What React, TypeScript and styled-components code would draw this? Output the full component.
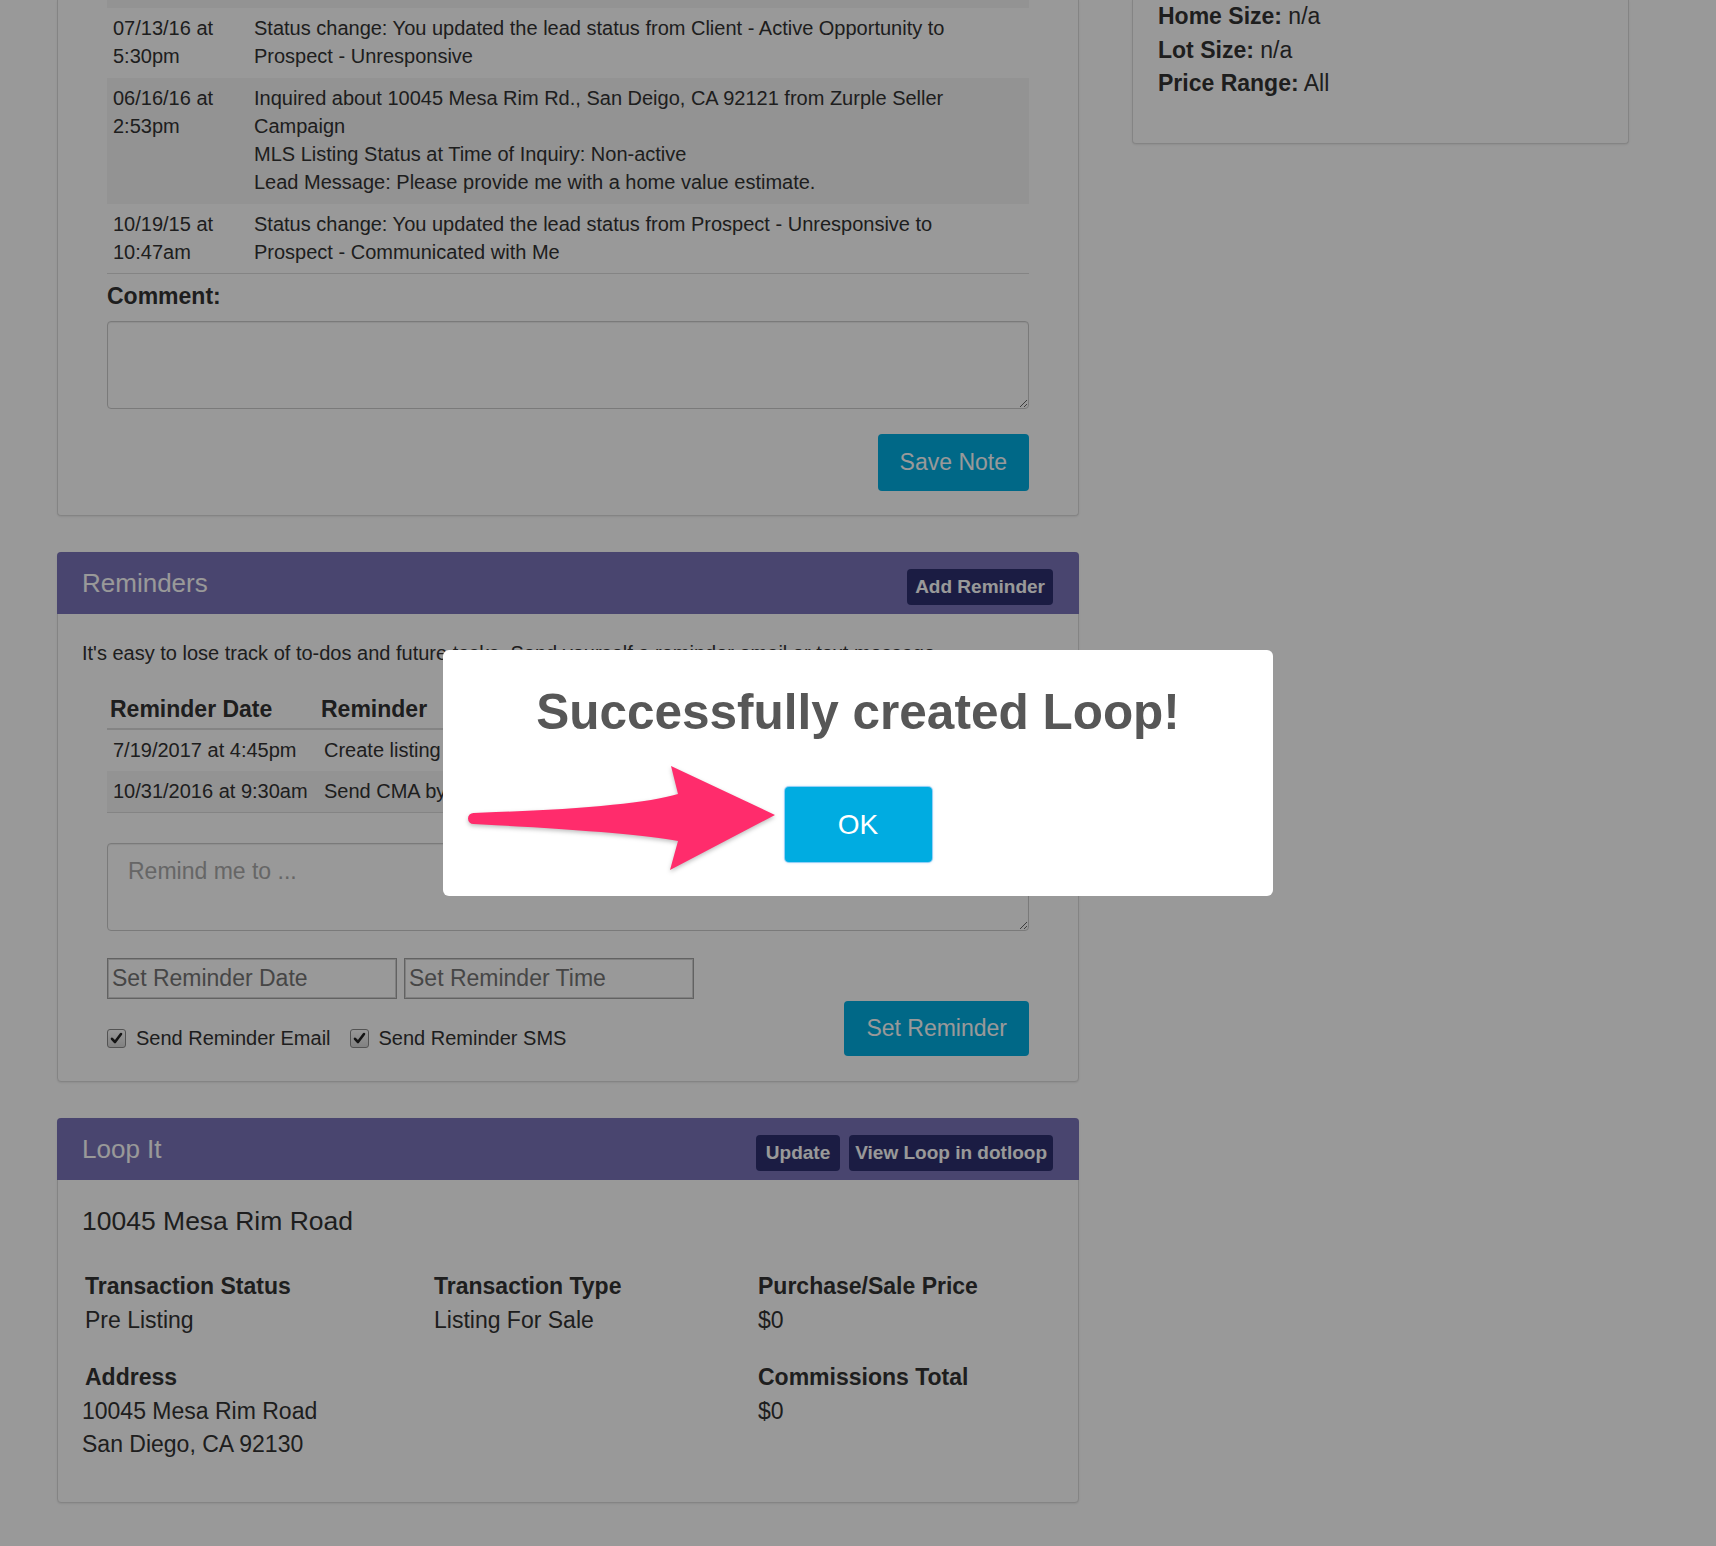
import React from "react";
import styled, { createGlobalStyle } from "styled-components";

const GlobalStyle = createGlobalStyle`
  html, body { margin: 0; padding: 0; background: #fff; }
  body {
    font-family: "Liberation Sans", Arial, Helvetica, sans-serif;
    color: #333;
    font-size: 20px;
    line-height: 1.42857;
  }
  * { box-sizing: border-box; }
`;

const Page = styled.div`
  display: flex;
  align-items: flex-start;
  gap: 53px;
  padding-left: 57px;
  min-height: 1546px;
`;

const MainColumn = styled.div`
  width: 1022px;
  display: flex;
  flex-direction: column;
  gap: 36px;
`;

const SideColumn = styled.div`
  width: 497px;
`;

const Panel = styled.section<{ $cut?: boolean }>`
  background: #fff;
  border: 1px solid #ddd;
  border-top: ${(p) => (p.$cut ? "none" : "1px solid #ddd")};
  border-radius: ${(p) => (p.$cut ? "0 0 4px 4px" : "4px")};
  box-shadow: 0 1px 2px rgba(0, 0, 0, 0.08);
`;

const PanelHeader = styled.header`
  height: 62px;
  margin: -1px -1px 0;
  padding: 0 26px 0 25px;
  background: #7b74b9;
  border-radius: 4px 4px 0 0;
  display: flex;
  align-items: center;
  justify-content: space-between;
`;

const PanelTitle = styled.h3`
  margin: 0;
  font-size: 26px;
  font-weight: normal;
  line-height: 1.1;
  color: #fff;
`;

const HeaderActions = styled.div`
  display: flex;
  gap: 9px;
  margin-top: 8px;
`;

const HeaderButton = styled.button<{ $px?: number }>`
  height: 36px;
  padding: 0 ${(p) => p.$px ?? 8}px;
  border: none;
  border-radius: 4px;
  background: #2d3070;
  color: #fff;
  font-family: inherit;
  font-size: 19px;
  font-weight: bold;
`;

const PanelBody = styled.div<{ $pad: string }>`
  padding: ${(p) => p.$pad};
  display: flex;
  flex-direction: column;
`;

/* Notes */
const StubRow = styled.div`
  height: 8px;
  background: #f5f5f5;
`;

const NotesTable = styled.div`
  border-bottom: 1px solid #ddd;
`;

const NoteRow = styled.div<{ $shaded?: boolean }>`
  display: grid;
  grid-template-columns: 141px 781px;
  padding: 6px 0 7px;
  line-height: 28.3px;
  background: ${(p) => (p.$shaded ? "#f5f5f5" : "transparent")};
`;

const DateCell = styled.div`
  padding: 0 6px;
`;

const MessageCell = styled.div`
  padding: 0 45px 0 6px;
`;

const FieldLabel = styled.label`
  display: block;
  margin-top: 8px;
  font-size: 23px;
  font-weight: bold;
  line-height: 28px;
`;

const TextArea = styled.textarea<{ $mt: number }>`
  display: block;
  width: 100%;
  height: 88px;
  margin-top: ${(p) => p.$mt}px;
  padding: 14px 20px;
  border: 1px solid #ccc;
  border-radius: 4px;
  box-shadow: inset 0 1px 1px rgba(0, 0, 0, 0.075);
  font-family: inherit;
  font-size: 23px;
  color: #333;
  background: #fff;
  resize: vertical;
  &::placeholder { color: #aaa; }
`;

const PrimaryButton = styled.button<{ $h: number; $mt?: number }>`
  align-self: flex-end;
  height: ${(p) => p.$h}px;
  margin-top: ${(p) => p.$mt ?? 0}px;
  padding: 0 22px;
  border: none;
  border-radius: 4px;
  background: #00ade2;
  color: #fff;
  font-family: inherit;
  font-size: 23px;
`;

/* Reminders */
const Intro = styled.p`
  margin: 0;
  line-height: 28px;
`;

const Indent = styled.div`
  padding: 0 25px;
  display: flex;
  flex-direction: column;
`;

const ReminderTable = styled.div`
  margin-top: 20px;
  border-bottom: 1px solid #ddd;
`;

const ReminderHead = styled.div`
  display: grid;
  grid-template-columns: 211px 1fr;
  border-bottom: 2px solid #ddd;
`;

const HeadCell = styled.div`
  padding: 6px 3px 2px;
  font-size: 23px;
  font-weight: bold;
  line-height: 33px;
`;

const ReminderRow = styled.div<{ $shaded?: boolean }>`
  display: grid;
  grid-template-columns: 211px 1fr;
  padding: 6px 0 7px;
  line-height: 28px;
  background: ${(p) => (p.$shaded ? "#f5f5f5" : "transparent")};
`;

const Cell = styled.div`
  padding: 0 6px;
  white-space: nowrap;
`;

const FormFooter = styled.div`
  margin-top: 27px;
  display: flex;
  justify-content: space-between;
  align-items: flex-end;
`;

const FormLeft = styled.div`
  display: flex;
  flex-direction: column;
`;

const InputGroup = styled.div`
  display: flex;
  gap: 7px;
`;

const TextInput = styled.input`
  width: 290px;
  height: 41px;
  padding: 0 4px;
  border: 1px solid #a4a4a4;
  box-shadow: inset 0 0 0 1px #d6d6d6;
  border-radius: 0;
  font-family: inherit;
  font-size: 23px;
  background: #fff;
  &::placeholder { color: #757575; }
`;

const CheckRow = styled.div`
  margin-top: 25px;
  padding-bottom: 4px;
  display: flex;
  align-items: center;
  gap: 19px;
  line-height: 28px;
`;

const CheckLabel = styled.label`
  display: inline-flex;
  align-items: center;
  gap: 10px;
`;

const CheckBox = styled.span`
  width: 19px;
  height: 19px;
  border: 1px solid #8a8a8a;
  border-radius: 3px;
  background: linear-gradient(#fdfdfd, #d8d8d8);
  display: inline-flex;
  align-items: center;
  justify-content: center;
`;

/* Loop It */
const LoopTitle = styled.div`
  font-size: 26.5px;
  line-height: 32px;
`;

const InfoGrid = styled.div`
  margin-top: 33px;
  padding-left: 3px;
  display: grid;
  grid-template-columns: 349px 324px 1fr;
  row-gap: 24px;
  font-size: 23px;
  line-height: 33.5px;
`;

const InfoLabel = styled.div`
  font-weight: bold;
`;

const AddressLine = styled.div`
  margin-left: -3px;
`;

/* Side */
const SideBody = styled.div`
  padding: 0 25px 42px;
  font-size: 23px;
  line-height: 33.5px;
`;

const SideLabel = styled.b`
  font-weight: bold;
`;

/* Modal */
const Overlay = styled.div`
  position: fixed;
  inset: 0;
  background: rgba(0, 0, 0, 0.4);
  display: flex;
  align-items: center;
  justify-content: center;
  z-index: 10;
`;

const Modal = styled.div`
  position: relative;
  width: 830px;
  height: 246px;
  padding-top: 33px;
  background: #fff;
  border-radius: 6px;
  display: flex;
  flex-direction: column;
  align-items: center;
`;

const ModalTitle = styled.h2`
  margin: 0;
  font-size: 49.5px;
  font-weight: bold;
  line-height: 57px;
  color: #575757;
`;

const OkButton = styled.button`
  margin-top: 47px;
  width: 147px;
  height: 75px;
  border: none;
  border-radius: 4px;
  background: #00ace1;
  color: #fff;
  font-family: inherit;
  font-size: 28px;
  box-shadow: 0 0 0 1px rgba(140, 205, 245, 0.9), 0 0 3px rgba(128, 179, 235, 0.8);
`;

const ArrowSvg = styled.svg`
  position: absolute;
  left: 20px;
  top: 110px;
  overflow: visible;
  filter: drop-shadow(0 2px 2px rgba(0, 0, 0, 0.25));
`;

const Check = () => (
  <CheckBox>
    <svg width="15" height="15" viewBox="0 0 15 15">
      <path d="M3 7.8 L6 11 L12 3" fill="none" stroke="#222" strokeWidth="2.6" strokeLinecap="round" strokeLinejoin="round" />
    </svg>
  </CheckBox>
);

const notes = [
  {
    date: "07/13/16 at 5:30pm",
    lines: ["Status change: You updated the lead status from Client - Active Opportunity to Prospect - Unresponsive"],
  },
  {
    date: "06/16/16 at 2:53pm",
    lines: [
      "Inquired about 10045 Mesa Rim Rd., San Deigo, CA 92121 from Zurple Seller Campaign",
      "MLS Listing Status at Time of Inquiry: Non-active",
      "Lead Message: Please provide me with a home value estimate.",
    ],
    shaded: true,
  },
  {
    date: "10/19/15 at 10:47am",
    lines: ["Status change: You updated the lead status from Prospect - Unresponsive to Prospect - Communicated with Me"],
  },
];

export default function App() {
  return (
    <>
      <GlobalStyle />
      <Page>
        <MainColumn>
          <Panel $cut>
            <PanelBody $pad="0 49px 24px">
              <NotesTable>
                <StubRow />
                {notes.map((n) => (
                  <NoteRow key={n.date} $shaded={n.shaded}>
                    <DateCell>{n.date}</DateCell>
                    <MessageCell>
                      {n.lines.map((l) => (
                        <div key={l}>{l}</div>
                      ))}
                    </MessageCell>
                  </NoteRow>
                ))}
              </NotesTable>
              <FieldLabel>Comment:</FieldLabel>
              <TextArea $mt={11} />
              <PrimaryButton $h={57} $mt={25}>Save Note</PrimaryButton>
            </PanelBody>
          </Panel>

          <Panel>
            <PanelHeader>
              <PanelTitle>Reminders</PanelTitle>
              <HeaderActions>
                <HeaderButton>Add Reminder</HeaderButton>
              </HeaderActions>
            </PanelHeader>
            <PanelBody $pad="25px 24px 25px">
              <Intro>It's easy to lose track of to-dos and future tasks. Send yourself a reminder email or text message.</Intro>
              <Indent>
                <ReminderTable>
                  <ReminderHead>
                    <HeadCell>Reminder Date</HeadCell>
                    <HeadCell>Reminder</HeadCell>
                  </ReminderHead>
                  <ReminderRow>
                    <Cell>7/19/2017 at 4:45pm</Cell>
                    <Cell>Create listing presentation</Cell>
                  </ReminderRow>
                  <ReminderRow $shaded>
                    <Cell>10/31/2016 at 9:30am</Cell>
                    <Cell>Send CMA by email</Cell>
                  </ReminderRow>
                </ReminderTable>
                <TextArea $mt={30} placeholder="Remind me to ..." />
                <FormFooter>
                  <FormLeft>
                    <InputGroup>
                      <TextInput placeholder="Set Reminder Date" />
                      <TextInput placeholder="Set Reminder Time" />
                    </InputGroup>
                    <CheckRow>
                      <CheckLabel>
                        <Check />
                        Send Reminder Email
                      </CheckLabel>
                      <CheckLabel>
                        <Check />
                        Send Reminder SMS
                      </CheckLabel>
                    </CheckRow>
                  </FormLeft>
                  <PrimaryButton $h={55}>Set Reminder</PrimaryButton>
                </FormFooter>
              </Indent>
            </PanelBody>
          </Panel>

          <Panel>
            <PanelHeader>
              <PanelTitle>Loop It</PanelTitle>
              <HeaderActions>
                <HeaderButton $px={10}>Update</HeaderButton>
                <HeaderButton $px={6}>View Loop in dotloop</HeaderButton>
              </HeaderActions>
            </PanelHeader>
            <PanelBody $pad="25px 24px 40px">
              <LoopTitle>10045 Mesa Rim Road</LoopTitle>
              <InfoGrid>
                <div>
                  <InfoLabel>Transaction Status</InfoLabel>
                  <div>Pre Listing</div>
                </div>
                <div>
                  <InfoLabel>Transaction Type</InfoLabel>
                  <div>Listing For Sale</div>
                </div>
                <div>
                  <InfoLabel>Purchase/Sale Price</InfoLabel>
                  <div>$0</div>
                </div>
                <div>
                  <InfoLabel>Address</InfoLabel>
                  <AddressLine>10045 Mesa Rim Road</AddressLine>
                  <AddressLine>San Diego, CA 92130</AddressLine>
                </div>
                <div />
                <div>
                  <InfoLabel>Commissions Total</InfoLabel>
                  <div>$0</div>
                </div>
              </InfoGrid>
            </PanelBody>
          </Panel>
        </MainColumn>

        <SideColumn>
          <Panel $cut>
            <SideBody>
              <div><SideLabel>Home Size:</SideLabel> n/a</div>
              <div><SideLabel>Lot Size:</SideLabel> n/a</div>
              <div><SideLabel>Price Range:</SideLabel> All</div>
            </SideBody>
          </Panel>
        </SideColumn>
      </Page>

      <Overlay>
        <Modal>
          <ArrowSvg width="320" height="115" viewBox="0 0 320 115">
            <path
              d="M10.5 53 Q168 48 215 34 L208 6 L312 55 L207 110 L215 81 Q168 72 10.5 64 A5.5 5.5 0 0 1 10.5 53 Z"
              fill="#ff2c6c"
            />
          </ArrowSvg>
          <ModalTitle>Successfully created Loop!</ModalTitle>
          <OkButton>OK</OkButton>
        </Modal>
      </Overlay>
    </>
  );
}
